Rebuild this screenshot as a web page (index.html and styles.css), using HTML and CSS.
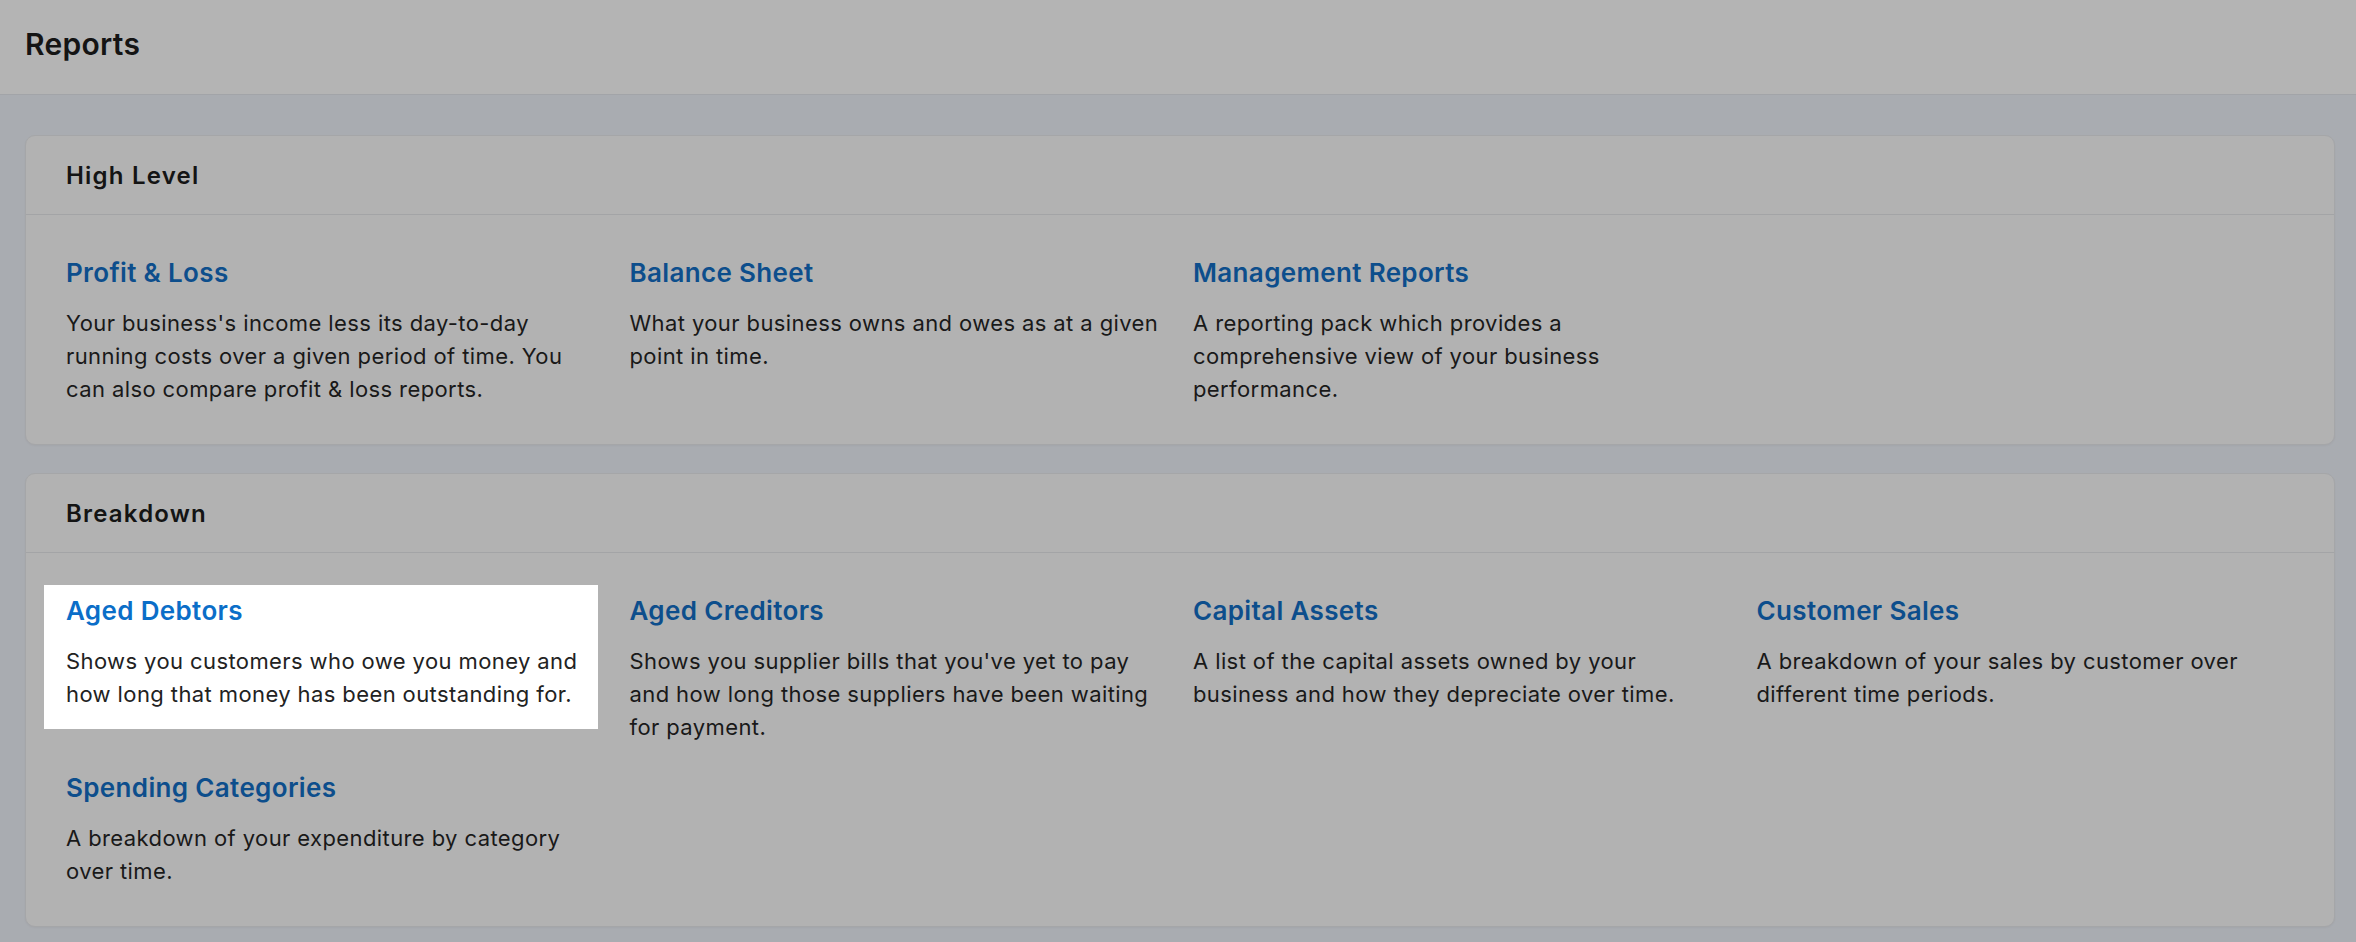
FILE: index.html
```html
<!DOCTYPE html>
<html lang="en">
<head>
<meta charset="utf-8">
<title>Reports</title>
<link rel="stylesheet" href="styles.css">
</head>
<body>
<header class="topbar">
  <h1 class="page-title">Reports</h1>
</header>
<main class="content">
  <section class="card">
    <h2 class="card-head">High Level</h2>
    <div class="card-body">
      <div class="report">
        <a class="report-link" href="#">Profit &amp; Loss</a>
        <p class="report-desc">Your business's income less its day-to-day running costs over a given period of time. You can also compare profit &amp; loss reports.</p>
      </div>
      <div class="report">
        <a class="report-link" href="#">Balance Sheet</a>
        <p class="report-desc">What your business owns and owes as at a given point in time.</p>
      </div>
      <div class="report">
        <a class="report-link" href="#">Management Reports</a>
        <p class="report-desc">A reporting pack which provides a comprehensive view of your business performance.</p>
      </div>
    </div>
  </section>
  <section class="card">
    <h2 class="card-head">Breakdown</h2>
    <div class="card-body">
      <div class="report report-spot">
        <a class="report-link" href="#">Aged Debtors</a>
        <p class="report-desc">Shows you customers who owe you money and how long that money has been outstanding for.</p>
      </div>
      <div class="report">
        <a class="report-link" href="#">Aged Creditors</a>
        <p class="report-desc">Shows you supplier bills that you've yet to pay and how long those suppliers have been waiting for payment.</p>
      </div>
      <div class="report">
        <a class="report-link" href="#">Capital Assets</a>
        <p class="report-desc">A list of the capital assets owned by your business and how they depreciate over time.</p>
      </div>
      <div class="report">
        <a class="report-link" href="#">Customer Sales</a>
        <p class="report-desc">A breakdown of your sales by customer over different time periods.</p>
      </div>
      <div class="report">
        <a class="report-link" href="#">Spending Categories</a>
        <p class="report-desc">A breakdown of your expenditure by category over time.</p>
      </div>
    </div>
  </section>
</main>
</body>
</html>
```

FILE: styles.css
```css
* { box-sizing: border-box; }

html, body {
  margin: 0;
  padding: 0;
}

body {
  background: #a9acb1;
  font-family: Inter, Lato, "Noto Sans", sans-serif;
  color: #191919;
  min-height: 942px;
}

.topbar {
  height: 95px;
  background: #b4b4b4;
  border-bottom: 1px solid #a2a4a8;
  display: flex;
  align-items: center;
  padding: 0 25px 6px;
}

.page-title {
  margin: 0;
  font-size: 30px;
  font-weight: 600;
  color: #141414;
  letter-spacing: 0.3px;
}

.content {
  padding: 40px 21px 15px 25px;
  display: flex;
  flex-direction: column;
  gap: 28px;
}

.card {
  background: #b2b2b2;
  border: 1px solid #a5a6a8;
  border-radius: 10px;
  box-shadow: 0 1px 2px rgba(0,0,0,0.04);
}

.card-head {
  margin: 0;
  height: 79px;
  display: flex;
  align-items: center;
  padding: 0 40px;
  border-bottom: 1px solid #a3a4a6;
  font-size: 24px;
  font-weight: 600;
  color: #141414;
  letter-spacing: 1.2px;
}

.card-body {
  padding: 41px 46px 38px 40px;
  display: grid;
  grid-template-columns: repeat(4, 1fr);
  column-gap: 32px;
  row-gap: 27px;
  align-items: start;
}

.report {
  display: flex;
  flex-direction: column;
}

.report-link {
  font-size: 26px;
  line-height: 34px;
  font-weight: 600;
  color: #0d4e8c;
  text-decoration: none;
  align-self: flex-start;
  letter-spacing: 0.35px;
}

.report-desc {
  margin: 17px 0 0;
  font-size: 22px;
  line-height: 33px;
  color: #191919;
  letter-spacing: 0.4px;
}

.report-spot {
  background: #ffffff;
  margin: -9px 0 -18px -22px;
  padding: 9px 0 18px 22px;
}

.report-spot .report-link {
  color: #0b6ec8;
}

.report-spot .report-desc {
  color: #222222;
}
```
